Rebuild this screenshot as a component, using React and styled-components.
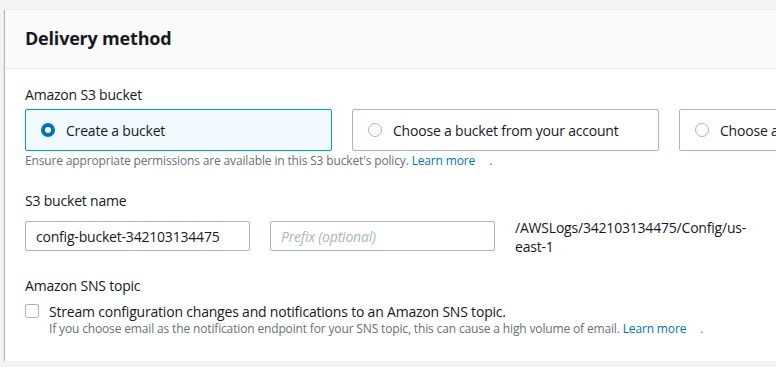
import React from "react";
import styled, { createGlobalStyle } from "styled-components";

const Global = createGlobalStyle`
  html, body { margin: 0; padding: 0; background: #f2f3f3; overflow: hidden; }
  body { font-family: "Open Sans", "Noto Sans", Arial, sans-serif; color: #16191f; letter-spacing: -0.2px; }
  * { box-sizing: border-box; }
`;

const Page = styled.div`
  padding: 9px 0 0 5px;
  width: 1000px;
`;

const Card = styled.section`
  width: 960px;
  background: #fff;
  border-top: 1px solid #eaeded;
  box-shadow: 0 1px 1px 0 rgba(0, 28, 36, 0.5), 1px 1px 1px 0 rgba(0, 28, 36, 0.15),
    -1px 1px 1px 0 rgba(0, 28, 36, 0.2);
`;

const Header = styled.header`
  background: #fafafa;
  border-bottom: 1px solid #eaeded;
  padding: 17px 20px 19px 20px;
`;

const Title = styled.h2`
  margin: 0;
  font-size: 18px;
  line-height: 22px;
  font-weight: 700;
  letter-spacing: -0.2px;
  color: #16191f;
`;

const Body = styled.div`
  padding: 16px 20px 24px 20px;
  display: flex;
  flex-direction: column;
`;

const Field = styled.div`
  display: flex;
  flex-direction: column;
  margin-top: ${(p) => p.$mt || 0}px;
`;

const Label = styled.div`
  font-size: 14px;
  line-height: 20px;
  color: #16191f;
`;

const Tiles = styled.div`
  display: flex;
  gap: 20.5px;
  margin-top: 4px;
`;

const Tile = styled.label`
  width: 306.5px;
  height: 42px;
  flex: none;
  display: flex;
  align-items: center;
  gap: 11px;
  padding: 0 15px;
  border: 1px solid ${(p) => (p.$selected ? "#00a1c9" : "#aab7b8")};
  background: ${(p) => (p.$selected ? "#f1faff" : "#fff")};
  border-radius: 2px;
  font-size: 14px;
  color: #16191f;
  white-space: nowrap;
  overflow: hidden;
`;

const Radio = styled.span`
  width: 14px;
  height: 14px;
  border-radius: 50%;
  flex: none;
  border: ${(p) => (p.$checked ? "4px solid #0073bb" : "1px solid #aab7b8")};
  background: #fff;
`;

const Help = styled.div`
  font-size: 12px;
  line-height: 16px;
  letter-spacing: -0.15px;
  color: #687078;
  margin-top: ${(p) => p.$mt || 2}px;
`;

const Link = styled.a`
  color: #0073bb;
  text-decoration: none;
  margin-right: 14px;
`;

const InputRow = styled.div`
  display: flex;
  gap: 20px;
  margin-top: 10px;
  align-items: flex-start;
`;

const Input = styled.div`
  width: 225px;
  height: 30px;
  flex: none;
  border: 1px solid #aab7b8;
  border-radius: 2px;
  padding: 0 10px;
  display: flex;
  align-items: center;
  font-size: 14px;
  color: ${(p) => (p.$placeholder ? "#aab7b8" : "#16191f")};
  font-style: ${(p) => (p.$placeholder ? "italic" : "normal")};
  background: #fff;
`;

const Suffix = styled.div`
  width: 248px;
  font-size: 14px;
  line-height: 19px;
  margin-top: -3px;
  color: #16191f;
`;

const CheckRow = styled.div`
  display: flex;
  gap: 10px;
  margin-top: 7px;
  align-items: flex-start;
`;

const Checkbox = styled.span`
  width: 14px;
  height: 14px;
  flex: none;
  border: 1px solid #aab7b8;
  border-radius: 2px;
  margin-top: 1px;
  background: #fff;
`;

const CheckText = styled.div`
  display: flex;
  flex-direction: column;
  font-size: 14px;
  line-height: 17px;
`;

export default function App() {
  return (
    <>
      <Global />
      <Page>
        <Card>
          <Header>
            <Title>Delivery method</Title>
          </Header>
          <Body>
            <Field>
              <Label>Amazon S3 bucket</Label>
              <Tiles>
                <Tile $selected>
                  <Radio $checked />
                  Create a bucket
                </Tile>
                <Tile>
                  <Radio />
                  Choose a bucket from your account
                </Tile>
                <Tile>
                  <Radio />
                  Choose a bucket from another account
                </Tile>
              </Tiles>
              <Help>
                Ensure appropriate permissions are available in this S3 bucket's policy.{" "}
                <Link>Learn more</Link>.
              </Help>
            </Field>
            <Field $mt={22}>
              <Label>S3 bucket name</Label>
              <InputRow>
                <Input>config-bucket-342103134475</Input>
                <Input $placeholder>Prefix (optional)</Input>
                <Suffix>/AWSLogs/342103134475/Config/us-east-1</Suffix>
              </InputRow>
            </Field>
            <Field $mt={20}>
              <Label>Amazon SNS topic</Label>
              <CheckRow>
                <Checkbox />
                <CheckText>
                  Stream configuration changes and notifications to an Amazon SNS topic.
                  <Help $mt={1}>
                    If you choose email as the notification endpoint for your SNS topic, this can
                    cause a high volume of email. <Link>Learn more</Link>.
                  </Help>
                </CheckText>
              </CheckRow>
            </Field>
          </Body>
        </Card>
      </Page>
    </>
  );
}
